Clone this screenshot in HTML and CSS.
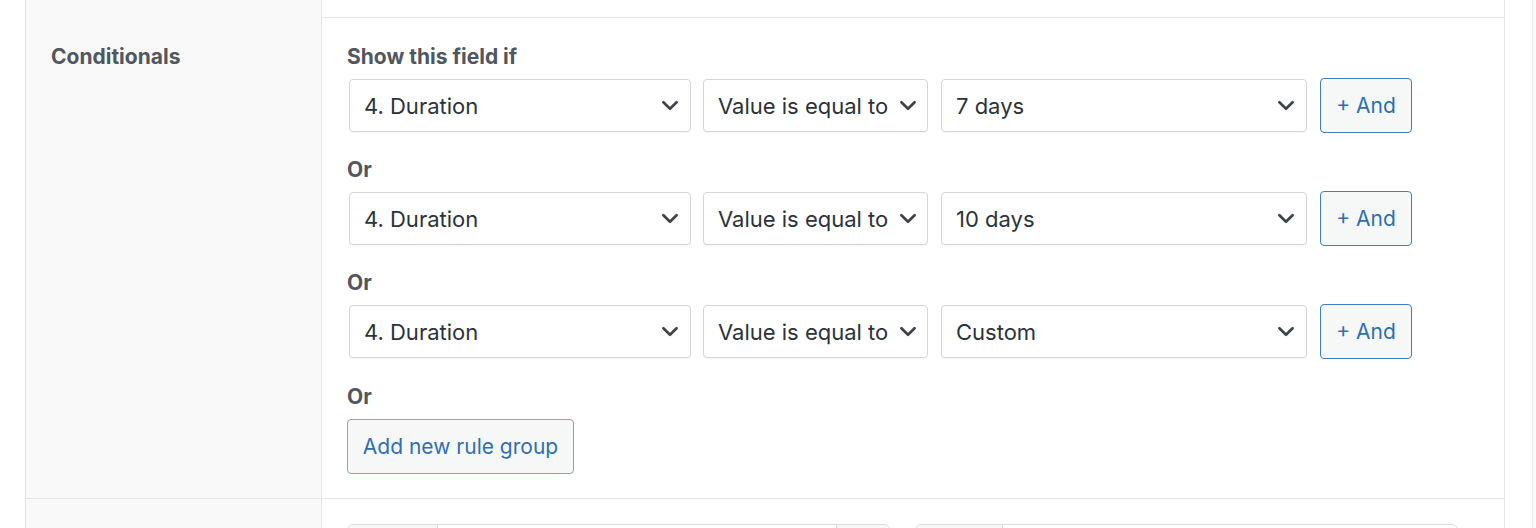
FILE: index.html
```html
<!DOCTYPE html>
<html>
<head>
<meta charset="utf-8">
<link rel="stylesheet" href="styles.css">
</head>
<body>
<div class="page">
  <div class="table">
    <div class="row row-prev">
      <div class="label-col"></div>
      <div class="field-col"></div>
    </div>
    <div class="row">
      <div class="label-col"><div class="label">Conditionals</div></div>
      <div class="field-col">
        <div class="caption">Show this field if</div>
        <div class="rule">
          <div class="select s1"><span>4. Duration</span><svg class="chev" viewBox="0 0 16 10"><path d="M2 2l6 6 6-6"/></svg></div>
          <div class="select s2"><span>Value is equal to</span><svg class="chev" viewBox="0 0 16 10"><path d="M2 2l6 6 6-6"/></svg></div>
          <div class="select s3"><span>7 days</span><svg class="chev" viewBox="0 0 16 10"><path d="M2 2l6 6 6-6"/></svg></div>
          <button class="btn and">+ And</button>
        </div>
        <div class="caption or">Or</div>
        <div class="rule">
          <div class="select s1"><span>4. Duration</span><svg class="chev" viewBox="0 0 16 10"><path d="M2 2l6 6 6-6"/></svg></div>
          <div class="select s2"><span>Value is equal to</span><svg class="chev" viewBox="0 0 16 10"><path d="M2 2l6 6 6-6"/></svg></div>
          <div class="select s3"><span>10 days</span><svg class="chev" viewBox="0 0 16 10"><path d="M2 2l6 6 6-6"/></svg></div>
          <button class="btn and">+ And</button>
        </div>
        <div class="caption or">Or</div>
        <div class="rule">
          <div class="select s1"><span>4. Duration</span><svg class="chev" viewBox="0 0 16 10"><path d="M2 2l6 6 6-6"/></svg></div>
          <div class="select s2"><span>Value is equal to</span><svg class="chev" viewBox="0 0 16 10"><path d="M2 2l6 6 6-6"/></svg></div>
          <div class="select s3"><span>Custom</span><svg class="chev" viewBox="0 0 16 10"><path d="M2 2l6 6 6-6"/></svg></div>
          <button class="btn and">+ And</button>
        </div>
        <div class="caption or last">Or</div>
        <button class="btn group">Add new rule group</button>
      </div>
    </div>
    <div class="row row-next">
      <div class="label-col"></div>
      <div class="field-col next-fields">
        <div class="igroup g1"><div class="pre p1"></div><div class="mid"></div><div class="post"></div></div>
        <div class="igroup g2"><div class="pre p2"></div><div class="mid"></div></div>
      </div>
    </div>
  </div>
</div>
</body>
</html>
```
FILE: styles.css
```css
html, body {
  margin: 0;
  padding: 0;
  background: #fff;
}
body {
  font-family: Inter, "Liberation Sans", Arial, sans-serif;
  color: #50575e;
  height: 528px;
  overflow: hidden;
}
.page {
  width: 1536px;
  height: 528px;
  padding-left: 25px;
  box-sizing: border-box;
  box-shadow: inset -3px 0 0 #fafafa, inset -4px 0 0 #ececec;
}
.table {
  width: 1480px;
  border-left: 1px solid #e6e6e6;
  border-right: 1px solid #e6e6e6;
  box-sizing: border-box;
  background: #fff;
}
.row {
  display: grid;
  grid-template-columns: 296px 1fr;
  border-top: 1px solid #e6e6e6;
}
.row-prev {
  border-top: none;
  height: 17px;
}
.label-col {
  background: #f9f9f9;
  border-right: 1px solid #e6e6e6;
  padding: 27px 0 0 25px;
}
.label {
  font-size: 21px;
  line-height: 24px;
  font-weight: 700;
  color: #50575e;
}
.field-col {
  padding: 27px 0 24px 25px;
}
.caption {
  font-size: 21px;
  font-weight: 700;
  line-height: 24px;
  color: #50575e;
}
.caption.or {
  margin-top: 26px;
}
.caption.or.last {
  margin-top: 27px;
}
.rule {
  display: flex;
  align-items: center;
  margin-top: 10px;
  height: 53px;
}
.select {
  box-sizing: border-box;
  height: 53px;
  border: 1px solid #d4d6da;
  border-radius: 4px;
  background: #fff;
  box-shadow: 0 1px 1px rgba(0,0,0,0.04);
  display: flex;
  align-items: center;
  justify-content: space-between;
  padding: 0 11px 0 14px;
  font-size: 22px;
  color: #2c3338;
}
.s1 { width: 342px; margin-left: 2px; }
.s2 { width: 225px; margin-left: 12px; padding-right: 10px; }
.s3 { width: 366px; margin-left: 13px; }
.chev {
  width: 18px;
  height: 11px;
  flex: none;
  fill: none;
  stroke: #3c434a;
  stroke-width: 2.4;
  stroke-linecap: round;
  stroke-linejoin: round;
}
.btn {
  font-family: Inter, "Liberation Sans", Arial, sans-serif;
  font-size: 21px;
  color: #2f6fb0;
  background: #f6f7f7;
  border: 1px solid #3f7fc0;
  border-radius: 4px;
  box-sizing: border-box;
  height: 55px;
  padding: 0;
  cursor: pointer;
  flex: none;
}
.and {
  width: 92px;
  margin-left: 13px;
}
.group {
  display: block;
  margin-top: 10px;
  width: 227px;
  border-color: #7ea8d3;
}
.row-next {
  height: 40px;
}
.row-next .label-col {
  padding: 0;
}
.next-fields {
  padding: 25px 0 0 25px;
  display: flex;
  gap: 25px;
}
.igroup {
  display: flex;
  height: 40px;
  border: 1px solid #dcdde0;
  border-radius: 6px;
  box-sizing: border-box;
  overflow: hidden;
  flex: none;
}
.g1 { width: 543px; }
.g2 { width: 543px; }
.pre {
  background: #f6f7f7;
  border-right: 1px solid #dcdde0;
}
.p1 { width: 89px; }
.p2 { width: 86px; }
.mid { flex: 1; }
.post {
  width: 52px;
  background: #f6f7f7;
  border-left: 1px solid #dcdde0;
}
```
